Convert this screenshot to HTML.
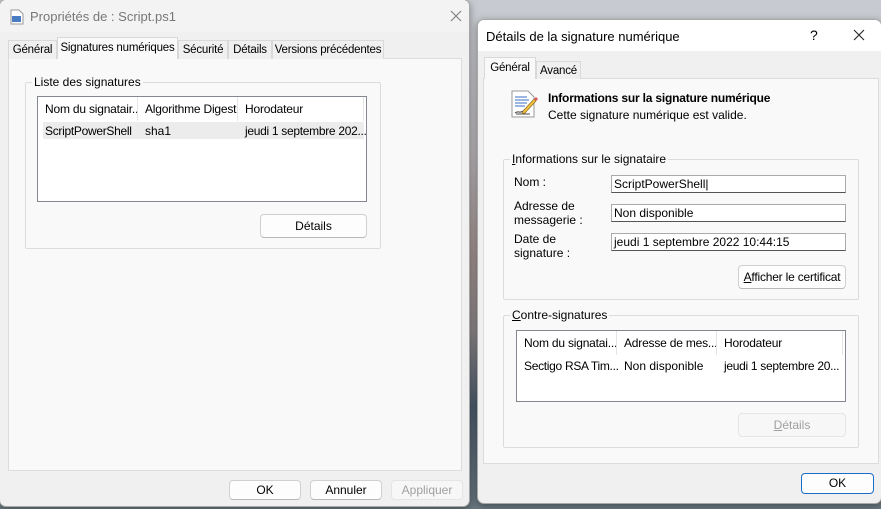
<!DOCTYPE html>
<html><head><meta charset="utf-8"><style>
*{box-sizing:border-box;margin:0;padding:0}
body{width:881px;height:509px;overflow:hidden;position:relative;font-family:"Liberation Sans",sans-serif;font-size:12px;color:#000;
background:linear-gradient(180deg,#c8ccd2 0%,#b8b4b8 30%,#a0908e 50%,#8a8486 65%,#4a5a6a 80%,#6a7880 100%)}
.a{position:absolute;white-space:nowrap}
.win{position:absolute;background:#f0f0f0;border:1px solid #a8a8a8;border-radius:7px;overflow:hidden;box-shadow:0 2px 8px rgba(0,0,0,.35)}
.panel{position:absolute;background:#f9f9f9;border:1px solid #dcdcdc}
.tab{position:absolute;border:1px solid #d9d9d9;border-bottom:none;background:#f0f0f0;line-height:18px;text-align:center;white-space:nowrap;overflow:hidden;font-size:11.5px;letter-spacing:-0.2px}
.tab.sel{background:#f9f9f9;z-index:2}
.grp{position:absolute;border:1px solid #dcdcdc;border-radius:2px}
.grp>span{position:absolute;top:-8px;left:6px;background:#f9f9f9;padding:0 2px;line-height:14px;white-space:nowrap}
.btn{position:absolute;background:#fdfdfd;border:1px solid #d0d0d0;border-bottom-color:#b8b8b8;border-radius:4px;text-align:center;white-space:nowrap}
.dis{color:#a0a0a0;background:#f7f7f7;border-color:#e5e5e5}
.lv{position:absolute;background:#fff;border:1px solid #828790;overflow:hidden}
.tb{position:absolute;background:#fff;border:1px solid #aaa;border-bottom-color:#555;padding-left:2px;line-height:16px;white-space:nowrap}
.hd{position:absolute;top:0;height:24px;line-height:24px;padding-left:7px;border-right:1px solid #e5e5e5;white-space:nowrap;overflow:hidden;letter-spacing:-0.2px}
</style></head><body>

<!-- LEFT WINDOW -->
<div class="win" style="left:-1px;top:-1px;width:471px;height:508px">
  <div class="a" style="left:0;top:0;width:471px;height:32px;background:#f3f3f3"></div>
  <svg class="a" style="left:10px;top:9px" width="14" height="16"><path d="M1 1h8l4 4v10H1z" fill="#fff" stroke="#999"/><rect x="2" y="7" width="9" height="6" fill="#4a7cc4"/></svg>
  <div class="a" style="left:30px;top:9px;font-size:13px;color:#777">Propriétés de : Script.ps1</div>
  <svg class="a" style="left:450px;top:10px" width="12" height="12"><path d="M1 1L11 11M11 1L1 11" stroke="#777" stroke-width="1"/></svg>
  <div class="panel" style="left:8px;top:58px;width:454px;height:413px"></div>
  <div class="tab" style="left:8px;top:40px;width:49px;height:19px">Général</div>
  <div class="tab sel" style="left:57px;top:37px;width:121px;height:22px;line-height:20px">Signatures numériques</div>
  <div class="tab" style="left:178px;top:40px;width:50px;height:19px">Sécurité</div>
  <div class="tab" style="left:228px;top:40px;width:44px;height:19px">Détails</div>
  <div class="tab" style="left:272px;top:40px;width:112px;height:19px">Versions précédentes</div>
  <div class="grp" style="left:25px;top:82px;width:356px;height:167px"><span>Liste des signatures</span></div>
  <div class="lv" style="left:37px;top:96px;width:330px;height:106px">
    <div class="hd" style="left:0;width:100px">Nom du signatair...</div>
    <div class="hd" style="left:100px;width:100px">Algorithme Digest</div>
    <div class="hd" style="left:200px;width:126px">Horodateur</div>
    <div class="a" style="left:5px;top:25px;width:321px;height:17px;background:#ececec"></div>
    <div class="a" style="left:7px;top:27px;letter-spacing:-0.3px">ScriptPowerShell</div>
    <div class="a" style="left:107px;top:27px">sha1</div>
    <div class="a" style="left:207px;top:27px;letter-spacing:-0.3px">jeudi 1 septembre 202...</div>
  </div>
  <div class="btn" style="left:260px;top:214px;width:107px;height:24px;line-height:22px">Détails</div>
  <div class="btn" style="left:229px;top:480px;width:72px;height:20px;line-height:18px">OK</div>
  <div class="btn" style="left:310px;top:480px;width:72px;height:20px;line-height:18px">Annuler</div>
  <div class="btn dis" style="left:391px;top:480px;width:72px;height:20px;line-height:18px">Appliquer</div>
</div>

<!-- RIGHT WINDOW -->
<div class="win" style="left:477px;top:19px;width:405px;height:485px">
  <div class="a" style="left:0;top:0;width:405px;height:31px;background:#fff"></div>
  <div class="a" style="left:8px;top:9px;font-size:13px">Détails de la signature numérique</div>
  <div class="a" style="left:332px;top:7px;font-size:14px">?</div>
  <svg class="a" style="left:375px;top:9px" width="12" height="12"><path d="M1 1L11 11M11 1L1 11" stroke="#222" stroke-width="1.1"/></svg>
  <div class="panel" style="left:5px;top:58px;width:396px;height:386px"></div>
  <div class="tab sel" style="left:6px;top:37px;width:52px;height:22px;line-height:20px">Général</div>
  <div class="tab" style="left:58px;top:41px;width:45px;height:18px;line-height:18px">Avancé</div>
  <svg class="a" style="left:32px;top:69px" width="30" height="30">
    <path d="M2 2h16l6 6v20H2z" fill="#fff" stroke="#999"/>
    <path d="M5 8h12M5 11h14M5 14h12M5 17h10" stroke="#3a6fc4"/>
    <path d="M5 24c3-3 5 1 8-2M6 25h14" stroke="#444"/>
    <path d="M13 22l11-12 2 2-11 12-3 1z" fill="#f2c040" stroke="#8a6a20" stroke-width=".7"/>
    <path d="M24 10l2-2 2 2-2 2z" fill="#d55"/>
  </svg>
  <div class="a" style="left:70px;top:71px;font-weight:bold;font-size:12px;letter-spacing:-0.2px">Informations sur la signature numérique</div>
  <div class="a" style="left:70px;top:88px">Cette signature numérique est valide.</div>
  <div class="grp" style="left:25px;top:139px;width:356px;height:141px"><span><u>I</u>nformations sur le signataire</span></div>
  <div class="a" style="left:36px;top:155px">Nom :</div>
  <div class="a" style="left:36px;top:179px;line-height:14px">Adresse de<br>messagerie :</div>
  <div class="a" style="left:36px;top:212px;line-height:14px">Date de<br>signature :</div>
  <div class="tb" style="left:133px;top:155px;width:235px;height:18px">ScriptPowerShell|</div>
  <div class="tb" style="left:133px;top:184px;width:235px;height:18px">Non disponible</div>
  <div class="tb" style="left:133px;top:213px;width:235px;height:18px">jeudi 1 septembre 2022 10:44:15</div>
  <div class="btn" style="left:260px;top:245px;width:108px;height:24px;line-height:22px;letter-spacing:-0.2px"><u>A</u>fficher le certificat</div>
  <div class="grp" style="left:25px;top:295px;width:356px;height:133px"><span><u>C</u>ontre-signatures</span></div>
  <div class="lv" style="left:38px;top:310px;width:330px;height:72px">
    <div class="hd" style="left:0;width:100px">Nom du signatai...</div>
    <div class="hd" style="left:100px;width:100px">Adresse de mes...</div>
    <div class="hd" style="left:200px;width:126px">Horodateur</div>
    <div class="a" style="left:7px;top:28px;letter-spacing:-0.3px">Sectigo RSA Tim...</div>
    <div class="a" style="left:107px;top:28px">Non disponible</div>
    <div class="a" style="left:207px;top:28px;letter-spacing:-0.3px">jeudi 1 septembre 20...</div>
  </div>
  <div class="btn dis" style="left:260px;top:393px;width:108px;height:24px;line-height:22px"><u>D</u>étails</div>
  <div class="btn" style="left:323px;top:453px;width:73px;height:21px;line-height:19px;border:1px solid #1a6ec8">OK</div>
</div>
</body></html>
